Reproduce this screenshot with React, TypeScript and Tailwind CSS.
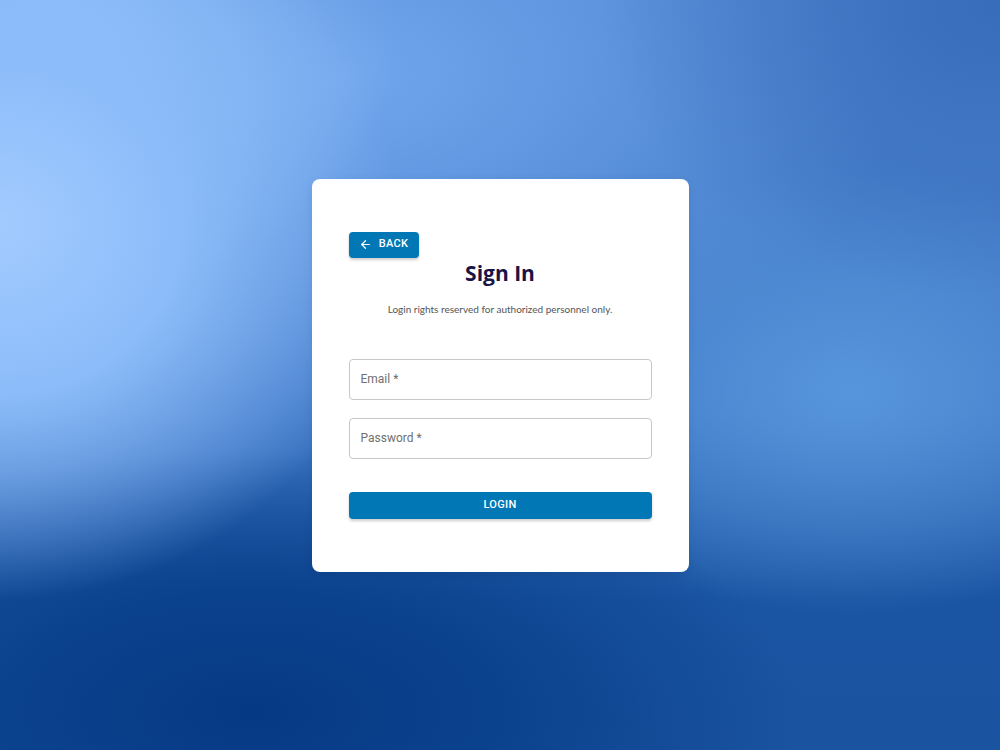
import { ArrowLeft } from 'lucide-react'

export default function App() {
  return (
    <div className="relative h-[750px] w-full overflow-hidden bg-[#2f66b4] font-['Roboto',sans-serif]">
      {/* blurred backdrop */}
      <div className="absolute inset-0 bg-[radial-gradient(ellipse_40%_50%_at_0%_30%,#a2cbff_0%,#8cbcf9_45%,transparent_100%),radial-gradient(ellipse_35%_35%_at_5%_5%,#92c0fb_0%,transparent_100%),radial-gradient(ellipse_55%_35%_at_25%_95%,#063984_0%,#0b428e_45%,transparent_100%),radial-gradient(ellipse_40%_40%_at_100%_0%,#376cba_0%,transparent_100%),radial-gradient(ellipse_35%_30%_at_85%_52%,#5795db_0%,transparent_100%),radial-gradient(ellipse_55%_45%_at_35%_10%,#70a6ec_0%,transparent_100%),linear-gradient(180deg,#4c83cf_0%,#4079c7_55%,#1a55a3_80%,#1a53a0_100%)]" />

      <div className="relative flex h-full items-center justify-center">
        <div className="w-[377px] rounded-lg bg-white px-[37px] pb-[53px] pt-[53px] shadow-[0_2px_8px_rgba(0,0,0,0.08)]">
          <button className="flex h-[26px] w-[70px] items-center justify-center gap-[7px] rounded-[4px] bg-[#0277b6] text-[11px] font-medium tracking-[0.3px] text-white shadow-[0_2px_3px_rgba(0,0,0,0.2)]">
            <ArrowLeft className="h-[13px] w-[13px]" strokeWidth={2.2} />
            BACK
          </button>

          <h1 className="mt-[1px] text-center font-['Open_Sans',sans-serif] text-[21px] font-bold leading-[28px] text-[#1a1446]">
            Sign In
          </h1>

          <p className="mt-[15px] text-center font-['Lato',sans-serif] text-[10px] text-[#555]">
            Login rights reserved for authorized personnel only.
          </p>

          <div className="mt-[42px] flex h-[41px] items-center rounded-[4px] border border-[#c8c8c8] px-[11px] text-[12px] text-[#6f6f6f]">
            Email *
          </div>

          <div className="mt-[18px] flex h-[41px] items-center rounded-[4px] border border-[#c8c8c8] px-[11px] text-[12px] text-[#6f6f6f]">
            Password *
          </div>

          <button className="mt-[33px] flex h-[27px] w-full items-center justify-center rounded-[4px] bg-[#0277b6] text-[11px] font-medium tracking-[0.3px] text-white shadow-[0_2px_3px_rgba(0,0,0,0.2)]">
            LOGIN
          </button>
        </div>
      </div>
    </div>
  )
}
